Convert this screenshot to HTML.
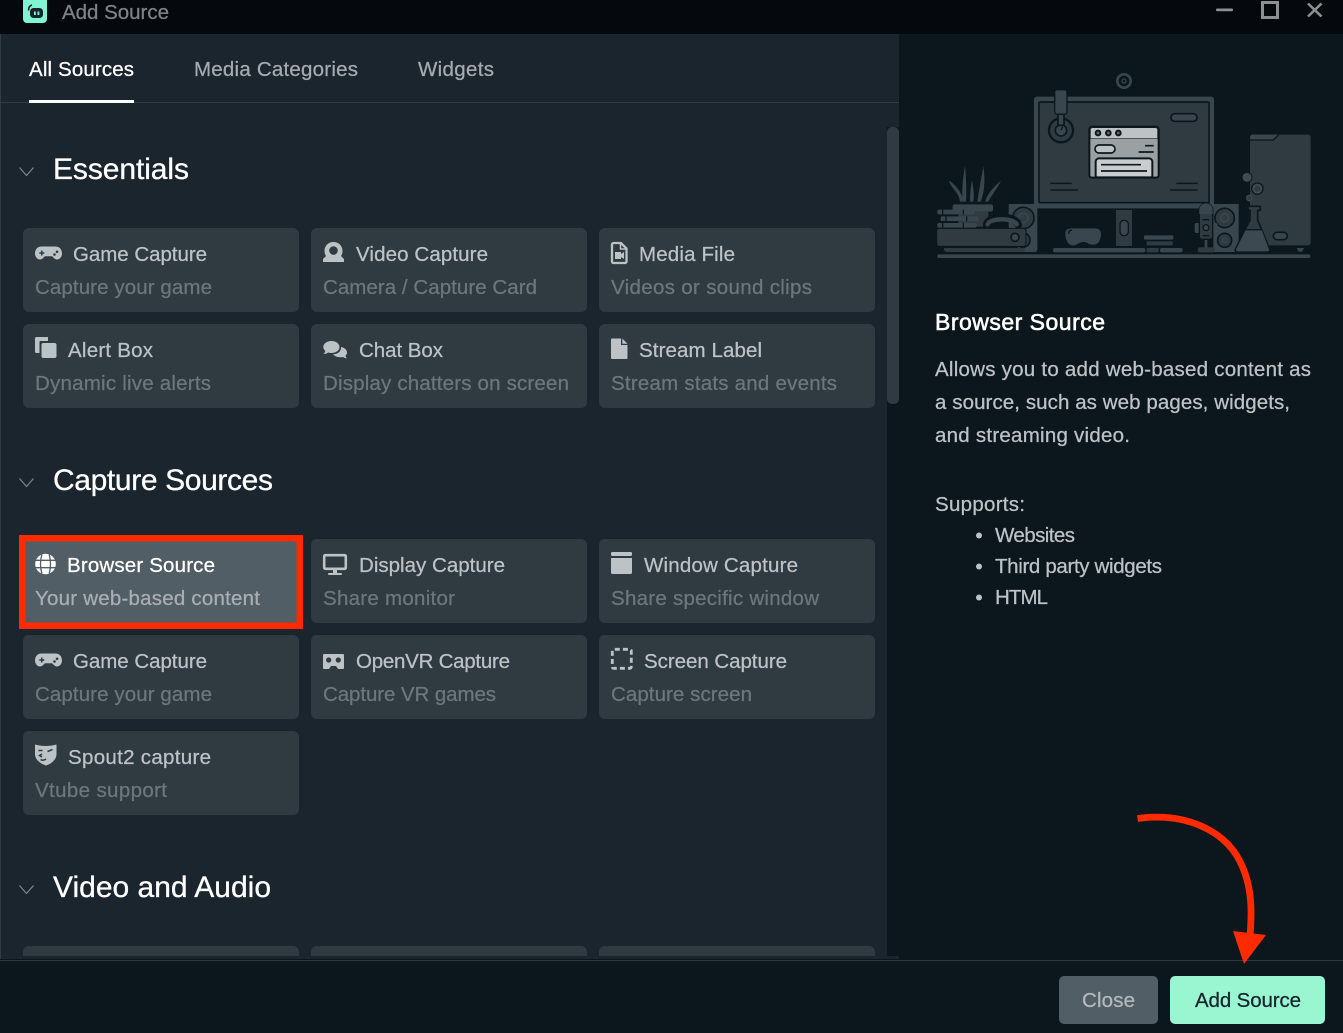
<!DOCTYPE html>
<html><head><meta charset="utf-8"><title>Add Source</title>
<style>
html,body{margin:0;padding:0;background:#0c171d;overflow:hidden}
svg{display:block}
text{font-family:"Liberation Sans",sans-serif}
.t{font-size:20.5px;fill:#bdc2c5;stroke:#bdc2c5;stroke-width:.25px}
.s{font-size:20.5px;fill:#6d767c;stroke:#6d767c;stroke-width:.25px}
.h{font-size:30px;fill:#fff;stroke:#fff;stroke-width:.3px}
.tab{font-size:20.5px;fill:#a6abaf;stroke:#a6abaf;stroke-width:.25px}
.p{font-size:20.5px;fill:#bdc2c5;stroke:#bdc2c5;stroke-width:.25px}
</style></head><body>
<svg width="1343" height="1033" viewBox="0 0 1343 1033" xmlns="http://www.w3.org/2000/svg">
<defs>
<g id="pad"><path d="M6.5 0H20.5C24.500 0 27 3 27 7C27 10.500 24.500 13 22 13C19.500 13 18.500 11 17 9.800H10C8.500 11 7.500 13 5 13C2.500 13 0 10.500 0 7C0 3 2.500 0 6.500 0Z" fill="#bdc2c5"/><path d="M6.800 4V9M4.300 6.500H9.300" stroke="#2f3a41" stroke-width="1.500"/><circle cx="19.500" cy="8" r="1.300" fill="#2f3a41"/><circle cx="22" cy="5.300" r="1.300" fill="#2f3a41"/></g>
</defs>

<!-- base -->
<rect width="1343" height="1033" fill="#0c171d"/>
<rect x="0" y="34" width="899" height="926" fill="#1b252e"/>
<rect x="887" y="127" width="12" height="829" fill="#0c171d"/>
<rect x="887" y="127" width="12" height="277" rx="5" fill="#2f3a41"/>
<rect x="0" y="102" width="899" height="1" fill="#2f3a41"/>
<rect x="0" y="34" width="1" height="926" fill="#2f3a41"/>

<!-- title bar -->
<rect width="1343" height="34" fill="#05090e"/>
<rect x="23" y="-3" width="24" height="26" rx="4" fill="#80f5d2"/>
<path d="M28.500 10.500C28.500 6.800 30 5.500 32 5" stroke="#17242d" stroke-width="1.600" fill="none"/>
<rect x="30" y="8" width="13" height="10" rx="3.500" fill="#17242d"/>
<rect x="34" y="11.500" width="1.800" height="3.500" fill="#80f5d2"/><rect x="37.500" y="11.500" width="1.800" height="3.500" fill="#80f5d2"/>
<text x="62" y="19" class="tab" style="fill:#7d8386;stroke:#7d8386" textLength="107">Add Source</text>
<rect x="1216" y="8.500" width="17" height="2.800" rx="1.200" fill="#8b9093"/>
<rect x="1262.500" y="2.500" width="15" height="15" fill="none" stroke="#8b9093" stroke-width="3"/>
<path d="M1308 3.500L1321.500 16.500M1321.500 3.500L1308 16.500" stroke="#8b9093" stroke-width="2.600"/>

<!-- tabs -->
<text x="29" y="76" class="tab" style="fill:#fff;stroke:#fff" textLength="105">All Sources</text>
<text x="194" y="76" class="tab" textLength="164">Media Categories</text>
<text x="418" y="76" class="tab" textLength="76">Widgets</text>
<rect x="29" y="100" width="105" height="3" fill="#fff"/>

<!-- headers -->
<path d="M19.500 167.500L26.500 175.500L33.500 167.500M19.500 478.500L26.500 486.500L33.500 478.500M19.500 885.500L26.500 893.500L33.500 885.500" fill="none" stroke="#7d868c" stroke-width="1.200"/>
<text x="53" y="179" class="h" textLength="136">Essentials</text>
<text x="53" y="490" class="h" textLength="220">Capture Sources</text>
<text x="53" y="897" class="h" textLength="218">Video and Audio</text>

<!-- cards -->
<g fill="#2f3a41">
<rect x="23" y="228" width="276" height="84" rx="6"/><rect x="311" y="228" width="276" height="84" rx="6"/><rect x="599" y="228" width="276" height="84" rx="6"/>
<rect x="23" y="324" width="276" height="84" rx="6"/><rect x="311" y="324" width="276" height="84" rx="6"/><rect x="599" y="324" width="276" height="84" rx="6"/>
<rect x="311" y="539" width="276" height="84" rx="6"/><rect x="599" y="539" width="276" height="84" rx="6"/>
<rect x="23" y="635" width="276" height="84" rx="6"/><rect x="311" y="635" width="276" height="84" rx="6"/><rect x="599" y="635" width="276" height="84" rx="6"/>
<rect x="23" y="731" width="276" height="84" rx="6"/>
<path d="M23 956V952a6 6 0 0 1 6-6H293a6 6 0 0 1 6 6V956ZM311 956V952a6 6 0 0 1 6-6H581a6 6 0 0 1 6 6V956ZM599 956V952a6 6 0 0 1 6-6H869a6 6 0 0 1 6 6V956Z"/>
</g>
<rect x="22" y="538" width="278" height="88" fill="#525e66"/>
<rect x="22.250" y="538.250" width="277.500" height="87.500" fill="none" stroke="#ff2a00" stroke-width="6.500"/>

<!-- card text -->
<text x="73" y="261" class="t" textLength="134">Game Capture</text>
<text x="35" y="294" class="s" textLength="177">Capture your game</text>
<text x="356" y="261" class="t" textLength="132">Video Capture</text>
<text x="323" y="294" class="s" textLength="214">Camera / Capture Card</text>
<text x="639" y="261" class="t" textLength="96">Media File</text>
<text x="611" y="294" class="s" textLength="201">Videos or sound clips</text>
<text x="68" y="357" class="t" textLength="85">Alert Box</text>
<text x="35" y="390" class="s" textLength="176">Dynamic live alerts</text>
<text x="359" y="357" class="t" textLength="84">Chat Box</text>
<text x="323" y="390" class="s" textLength="246">Display chatters on screen</text>
<text x="639" y="357" class="t" textLength="123">Stream Label</text>
<text x="611" y="390" class="s" textLength="226">Stream stats and events</text>
<text x="67" y="572" class="t" style="fill:#fff;stroke:#fff" textLength="148">Browser Source</text>
<text x="35" y="605" class="s" style="fill:#a8aeb2;stroke:#a8aeb2" textLength="225">Your web-based content</text>
<text x="359" y="572" class="t" textLength="146">Display Capture</text>
<text x="323" y="605" class="s" textLength="132">Share monitor</text>
<text x="644" y="572" class="t" textLength="154">Window Capture</text>
<text x="611" y="605" class="s" textLength="208">Share specific window</text>
<text x="73" y="668" class="t" textLength="134">Game Capture</text>
<text x="35" y="701" class="s" textLength="177">Capture your game</text>
<text x="356" y="668" class="t" textLength="154">OpenVR Capture</text>
<text x="323" y="701" class="s" textLength="173">Capture VR games</text>
<text x="644" y="668" class="t" textLength="143">Screen Capture</text>
<text x="611" y="701" class="s" textLength="141">Capture screen</text>
<text x="68" y="764" class="t" textLength="143">Spout2 capture</text>
<text x="35" y="797" class="s" textLength="132">Vtube support</text>

<!-- icons -->
<use href="#pad" x="35" y="246.500"/>
<use href="#pad" x="35" y="653.500"/>
<!-- video capture -->
<path d="M333.500 242C339 242 342.500 246 342.500 251C342.500 253 342 254.500 341 256L344 259V262H323V259L326 256C325 254.500 324.500 253 324.500 251C324.500 246 328 242 333.500 242Z" fill="#bdc2c5"/>
<circle cx="333.500" cy="250.500" r="4.300" fill="#2f3a41"/>
<!-- media file -->
<path d="M612 244.500a1.500 1.500 0 0 1 1.500-1.500H621L626.500 248.500V261.500a1.500 1.500 0 0 1-1.500 1.500H613.500a1.500 1.500 0 0 1-1.500-1.500Z" fill="none" stroke="#bdc2c5" stroke-width="2.300"/>
<path d="M620.500 243V249H626.500" fill="none" stroke="#bdc2c5" stroke-width="1.500"/>
<path d="M615 252H621V254L624 252V259L621 257V259H615Z" fill="#bdc2c5"/>
<!-- alert box -->
<path d="M35 338.500a1.500 1.500 0 0 1 1.500-1.500H48V341H40.500a1 1 0 0 0-1 1V353H36.500a1.500 1.500 0 0 1-1.500-1.500Z" fill="#bdc2c5"/>
<rect x="41.500" y="343" width="15" height="15" rx="2" fill="#bdc2c5"/>
<!-- chat -->
<path d="M331.500 341C336 341 339.500 343.700 339.500 347C339.500 350.300 336 353 331.500 353C330.300 353 329.200 352.800 328.200 352.500C327 353.500 325.500 354 323.500 354C324.700 353 325.200 351.800 325.300 350.800C324 349.700 323.300 348.400 323.300 347C323.300 343.700 327 341 331.500 341Z" fill="#bdc2c5"/>
<path d="M341 347C344.500 347.500 347 349.800 347 352.500C347 353.800 346.400 354.900 345.500 355.800C345.600 356.700 346.100 357.500 347 358.300C345.300 358.300 344 357.700 343 357C342.200 357.200 341.300 357.300 340.300 357.300C337 357.300 334.300 355.900 333 354.300C337.800 354.300 341.500 351.200 341 347Z" fill="#bdc2c5"/>
<!-- stream label -->
<path d="M611 339.500a1 1 0 0 1 1-1H621V345H627.500V358a1 1 0 0 1-1 1H612a1 1 0 0 1-1-1Z" fill="#bdc2c5"/>
<path d="M622.300 338.500L627.500 343.700H622.300Z" fill="#bdc2c5"/>
<!-- globe -->
<circle cx="45.500" cy="564" r="10.300" fill="#fff"/>
<path d="M35 560.300H56M35 567.700H56M41.800 554.500C40 561 40 567 41.800 573.500M49.200 554.500C51 561 51 567 49.200 573.500" stroke="#525e66" stroke-width="1.300" fill="none"/>
<!-- display -->
<rect x="324.200" y="555.200" width="21.600" height="13.600" rx="1" fill="none" stroke="#bdc2c5" stroke-width="2.600"/>
<rect x="333" y="570" width="4" height="3" fill="#bdc2c5"/><rect x="328" y="573" width="14" height="2" rx="1" fill="#bdc2c5"/>
<!-- window -->
<rect x="611" y="552" width="21" height="4" rx="1.200" fill="#bdc2c5"/>
<path d="M611 558H632V572.500a1.500 1.500 0 0 1-1.500 1.500H612.500a1.500 1.500 0 0 1-1.500-1.500Z" fill="#bdc2c5"/>
<!-- openvr -->
<path d="M324 654H343a1 1 0 0 1 1 1V668a1 1 0 0 1-1 1H338L336 666H331L329 669H324a1 1 0 0 1-1-1V655a1 1 0 0 1 1-1Z" fill="#bdc2c5"/>
<circle cx="328.700" cy="660" r="2.600" fill="#2f3a41"/><circle cx="338.300" cy="660" r="2.600" fill="#2f3a41"/>
<!-- screen -->
<rect x="612.300" y="649.300" width="19" height="19" rx="1.500" fill="none" stroke="#bdc2c5" stroke-width="2.800" stroke-dasharray="5 3.100" stroke-dashoffset="-1"/>
<!-- spout mask -->
<path d="M35 744.500C42 746.500 49 746.500 56.500 744.500V754C56.500 760 51 764 46 765.500C41 764 35 760 35 754Z" fill="#bdc2c5"/>
<path d="M38.500 750.500H42.500M47.500 751.500L52.500 749.500M42 754L39.500 755.500L42 757M40.500 759.500C42 760.500 44 760.500 46 759" stroke="#2f3a41" stroke-width="1.500" fill="none"/>

<!-- illustration -->
<g transform="translate(920 60) scale(.33333)">
<circle cx="612" cy="63" r="20" fill="#0c171d" stroke="#3a464e" stroke-width="8"/><circle cx="612" cy="63" r="6" fill="none" stroke="#3a464e" stroke-width="4"/>
<!-- speaker left -->
<path d="M266 432H352V568a8 8 0 0 1-8 8H300L266 500Z" fill="#3a464e"/>
<circle cx="310" cy="474" r="32" fill="#2f3a41" stroke="#0c171d" stroke-width="5"/><circle cx="310" cy="474" r="14" fill="none" stroke="#3a464e" stroke-width="5"/>
<circle cx="308" cy="540" r="22" fill="#2f3a41" stroke="#0c171d" stroke-width="5"/>
<!-- tower -->
<path d="M990 232a8 8 0 0 1 8-8H1164a8 8 0 0 1 8 8V548a8 8 0 0 1-8 8H990Z" fill="#2f3a41"/>
<path d="M990 238V232a8 8 0 0 1 8-8H1074L1060 238Z" fill="#3a464e"/><path d="M990 240H1060L1076 224" stroke="#0c171d" stroke-width="4" fill="none"/>
<rect x="1060" y="517" width="42" height="22" rx="11" fill="#3a464e" stroke="#0c171d" stroke-width="5"/>
<path d="M1130 564H1152L1146 575H1136Z" fill="#3a464e"/>
<!-- monitor -->
<rect x="342" y="110" width="540" height="335" rx="9" fill="#3a464e"/>
<rect x="357" y="126" width="510" height="302" rx="3" fill="#2f3a41" stroke="#0c171d" stroke-width="5"/>
<rect x="588" y="450" width="48" height="108" fill="#2f3a41"/>
<rect x="600" y="481" width="25" height="46" rx="12" fill="#3a464e" stroke="#0c171d" stroke-width="4"/>
<!-- headphone -->
<circle cx="423" cy="211" r="36" fill="#2f3a41" stroke="#0c171d" stroke-width="7"/><circle cx="423" cy="211" r="17" fill="#3a464e" stroke="#0c171d" stroke-width="5"/>
<path d="M423 211L428 200" stroke="#0c171d" stroke-width="4"/>
<rect x="414" y="160" width="18" height="36" fill="#3a464e" stroke="#0c171d" stroke-width="5"/>
<rect x="404" y="89" width="37" height="74" rx="8" fill="#3a464e" stroke="#0c171d" stroke-width="4"/>
<rect x="753" y="161" width="78" height="23" rx="11" fill="#3a464e" stroke="#0c171d" stroke-width="5"/>
<!-- window -->
<rect x="508" y="200" width="208" height="153" rx="8" fill="#9ba0a2" stroke="#0c171d" stroke-width="6"/>
<path d="M511 236V210a7 7 0 0 1 7-7H706a7 7 0 0 1 7 7V236Z" fill="#bdc2c5" stroke="#0c171d" stroke-width="2"/>
<g fill="#666d72" stroke="#0c171d" stroke-width="6"><circle cx="534" cy="219" r="7"/><circle cx="565" cy="219" r="7"/><circle cx="595" cy="219" r="7"/></g>
<rect x="525" y="255" width="60" height="24" rx="12" fill="#bdc2c5" stroke="#0c171d" stroke-width="5"/>
<path d="M675 257H701M656 276H701" stroke="#0c171d" stroke-width="5"/>
<path d="M527 352V305a10 10 0 0 1 10-10H687a10 10 0 0 1 10 10V352Z" fill="#c9cdcf" stroke="#0c171d" stroke-width="6"/>
<path d="M543 314H663M543 333H681" stroke="#0c171d" stroke-width="5"/>
<path d="M391 370H455M391 390H474M769 370H833M750 390H833" stroke="#0c171d" stroke-width="4.500"/>
<!-- plant -->
<g fill="#3a464e">
<path d="M120 425C117 395 88 380 88 362C100 372 125 390 130 425Z"/>
<path d="M128 425C124 390 130 345 135 318C138 350 140 390 138 425Z"/>
<path d="M150 425C150 400 152 380 156 360C160 385 164 405 160 425Z"/>
<path d="M172 425C178 385 186 345 190 318C196 360 194 395 182 425Z"/>
<path d="M195 425C205 395 225 378 243 362C232 385 215 405 205 425Z"/>
<rect x="98" y="433" width="121" height="22" rx="6"/>
</g>
<path d="M115 455H205V500H115Z" fill="#2f3a41"/>
<!-- books -->
<g fill="#3a464e"><rect x="52" y="449" width="113" height="14" rx="5"/><rect x="62" y="469" width="113" height="14" rx="5"/><rect x="52" y="489" width="118" height="14" rx="5"/></g>
<path d="M68 449V463M78 469V483M68 489V503M130 449V463M140 469V483M130 489V503" stroke="#0c171d" stroke-width="4"/>
<path d="M200 495C200 482 220 472 245 472C272 472 295 482 295 495" fill="none" stroke="#0c171d" stroke-width="22" stroke-linecap="round"/>
<path d="M203 493C205 484 225 478 245 478C268 478 287 484 290 493" fill="none" stroke="#3a464e" stroke-width="13" stroke-linecap="round"/>
<rect x="50" y="505" width="268" height="54" rx="8" fill="#2f3a41" stroke="#0c171d" stroke-width="3"/>
<circle cx="285" cy="532" r="12" fill="#3a464e" stroke="#0c171d" stroke-width="5"/>
<path d="M72 564H314V568a8 8 0 0 1-8 8H80a8 8 0 0 1-8-8Z" fill="#2f3a41"/>
<!-- headset -->
<path d="M436 520C436 508 446 505 455 505H525C535 505 543 510 543 522C543 540 535 554 520 554C505 554 503 546 490 546C477 546 472 556 458 556C445 556 436 540 436 520Z" fill="#3a464e"/>
<path d="M446 522C446 514 450 510 456 510" stroke="#0c171d" stroke-width="4" fill="none"/>
<rect x="399" y="564" width="277" height="13" rx="6" fill="#3a464e"/>
<!-- stack -->
<rect x="672" y="526" width="88" height="13" rx="4" fill="#3a464e"/>
<rect x="680" y="544" width="78" height="12" fill="#2f3a41"/>
<rect x="680" y="564" width="36" height="13" rx="3" fill="#2f3a41"/><rect x="720" y="564" width="68" height="13" rx="6" fill="#3a464e"/>
<!-- right speaker -->
<path d="M880 432H956V570a6 6 0 0 1-6 6H880Z" fill="#3a464e"/>
<circle cx="914" cy="474" r="29" fill="#2f3a41" stroke="#0c171d" stroke-width="5"/><circle cx="914" cy="474" r="12" fill="none" stroke="#3a464e" stroke-width="5"/>
<circle cx="914" cy="541" r="21" fill="#2f3a41" stroke="#0c171d" stroke-width="5"/><circle cx="914" cy="541" r="7" fill="none" stroke="#3a464e" stroke-width="4"/>
<!-- mic -->
<rect x="824" y="489" width="14" height="30" rx="5" fill="#3a464e"/><rect x="878" y="489" width="14" height="30" rx="5" fill="#3a464e"/>
<path d="M838 450a20 20 0 0 1 40 0V530a8 8 0 0 1-8 8H846a8 8 0 0 1-8-8Z" fill="#2f3a41" stroke="#0c171d" stroke-width="4"/>
<path d="M838 450a20 20 0 0 1 40 0V462H838Z" fill="#3a464e"/>
<circle cx="858" cy="503" r="9" fill="#3a464e" stroke="#0c171d" stroke-width="4"/>
<path d="M848 479H868M848 527H868" stroke="#0c171d" stroke-width="4"/>
<rect x="854" y="540" width="8" height="24" fill="#3a464e"/>
<rect x="833" y="562" width="52" height="15" rx="7" fill="#2f3a41"/>
<!-- flask -->
<circle cx="981" cy="352" r="15" fill="#3f4b53" stroke="#0c171d" stroke-width="3"/>
<circle cx="1012" cy="386" r="13" fill="#2f3a41" stroke="#0c171d" stroke-width="12"/>
<circle cx="1012" cy="386" r="12" fill="#2f3a41" stroke="#3f4b53" stroke-width="6"/>
<circle cx="988" cy="414" r="8" fill="#2f3a41" stroke="#3f4b53" stroke-width="4"/>
<path d="M988 439H1021V451H1013V480L1049 568a6 6 0 0 1-5 8H951a6 6 0 0 1-5-8L990 480V451H984V439Z" fill="#2f3a41" stroke="#0c171d" stroke-width="5" stroke-linejoin="round"/>
<path d="M977 510H1025L1047 568a5 5 0 0 1-5 6H953a5 5 0 0 1-5-6Z" fill="#3d4951"/>
<path d="M973 509H1027" stroke="#0c171d" stroke-width="4"/>
<!-- shelf -->
<rect x="52" y="583" width="1119" height="11" rx="5" fill="#3a464e"/>
</g>

<!-- right text -->
<text x="935" y="330" font-size="23" fill="#fff" stroke="#fff" stroke-width=".6" textLength="170">Browser Source</text>
<text x="935" y="376" class="p" textLength="376">Allows you to add web-based content as</text>
<text x="935" y="409" class="p" textLength="355">a source, such as web pages, widgets,</text>
<text x="935" y="442" class="p" textLength="195">and streaming video.</text>
<text x="935" y="511" class="p" textLength="90">Supports:</text>
<circle cx="979" cy="535.500" r="3" fill="#bdc2c5"/><circle cx="979" cy="566.500" r="3" fill="#bdc2c5"/><circle cx="979" cy="597.500" r="3" fill="#bdc2c5"/>
<text x="995" y="542" class="p" textLength="80">Websites</text>
<text x="995" y="573" class="p" textLength="167">Third party widgets</text>
<text x="995" y="604" class="p" textLength="53">HTML</text>

<!-- footer -->
<rect x="0" y="959" width="1343" height="74" fill="#0c171d"/>
<rect x="0" y="960" width="1343" height="1" fill="#2f3a41"/>
<rect x="1059" y="976" width="99" height="48" rx="5" fill="#525e66"/>
<text x="1082" y="1007" class="p" style="fill:#b4b9bc;stroke:#b4b9bc" textLength="53">Close</text>
<rect x="1170" y="976" width="155" height="48" rx="5" fill="#9af5d1"/>
<text x="1195" y="1007" class="p" style="fill:#17242d;stroke:#17242d" textLength="106">Add Source</text>

<!-- arrow -->
<path d="M1137.500 818.500C1185 812 1228 830 1243 868C1252 890 1252 912 1250 936" fill="none" stroke="#ff2a00" stroke-width="6.800"/>
<path d="M1233 931L1266 935L1244 964Z" fill="#ff2a00"/>
</svg>
</body></html>
